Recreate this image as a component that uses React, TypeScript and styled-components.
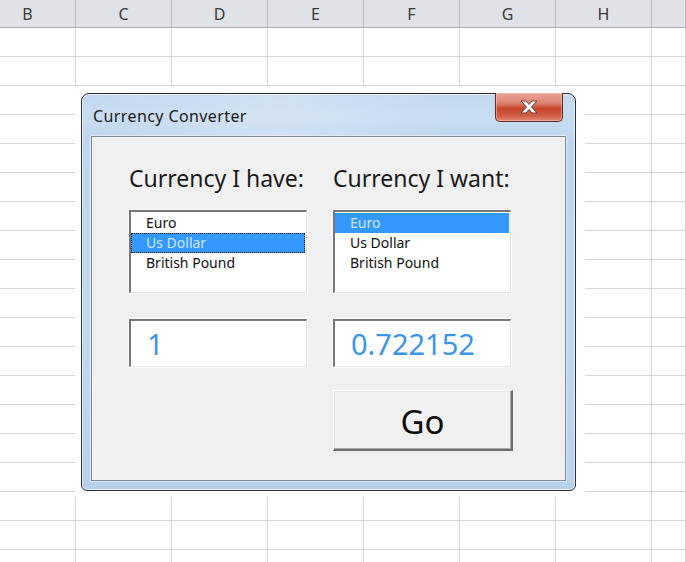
import React from "react";
import styled, { createGlobalStyle } from "styled-components";

const Global = createGlobalStyle`
  html, body { margin: 0; padding: 0; background: #ffffff; overflow: hidden; }
  body { width: 686px; height: 562px; font-family: "Noto Sans", "DejaVu Sans", sans-serif; }
`;

const Page = styled.div`
  position: relative;
  width: 686px;
  height: 562px;
  overflow: hidden;
  background: #ffffff;
`;

const Sheet = styled.div`
  display: grid;
  grid-template-columns: 76px repeat(6, 96px) 1fr;
  grid-auto-rows: 29px;
  grid-template-rows: 28px;
`;

const HeadCell = styled.div<{ $partial?: boolean }>`
  box-sizing: border-box;
  height: 28px;
  background: #dfe3e8;
  border-right: 1px solid #b9bec5;
  border-bottom: 1px solid #a9aeb5;
  display: flex;
  align-items: center;
  justify-content: center;
  padding-right: ${(p) => (p.$partial ? "20px" : "0")};
  font-family: "Noto Sans", sans-serif;
  font-size: 16px;
  color: #3a3a3a;
  line-height: 1;
  padding-top: 1px;
`;

const Cell = styled.div`
  box-sizing: border-box;
  height: 29px;
  border-right: 1px solid #d6d6d6;
  border-bottom: 1px solid #d6d6d6;
`;

const Clearance = styled.div`
  position: absolute;
  left: 75px;
  top: 86px;
  width: 510px;
  height: 411px;
  background: #ffffff;
`;

const Frame = styled.div`
  position: absolute;
  left: 81px;
  top: 93px;
  width: 495px;
  height: 398px;
  box-sizing: border-box;
  border: 1px solid #2c3138;
  border-radius: 8px 8px 6px 6px;
  background: linear-gradient(
    180deg,
    #c3d8ef 0%,
    #c8dcf1 6%,
    #bfd6ee 12%,
    #c2d8ef 60%,
    #b7d1ec 100%
  );
  box-shadow: inset 0 0 0 1px rgba(255, 255, 255, 0.55);
  display: flex;
  flex-direction: column;
  padding: 0 9px 9px 9px;
`;

const TitleBar = styled.div`
  height: 42px;
  display: flex;
  align-items: flex-start;
  justify-content: space-between;
  background: linear-gradient(
    90deg,
    rgba(255, 255, 255, 0) 0%,
    rgba(255, 255, 255, 0.22) 40%,
    rgba(255, 255, 255, 0) 75%
  );
`;

const Title = styled.div`
  margin-top: 11px;
  margin-left: 2px;
  font-family: "Noto Sans", sans-serif;
  font-size: 16px;
  color: #1b1b1b;
  letter-spacing: 0.4px;
`;

const CloseButton = styled.div`
  margin-top: -1px;
  margin-right: 3px;
  width: 68px;
  height: 29px;
  box-sizing: border-box;
  border: 1px solid #5b2d25;
  border-top: none;
  border-radius: 0 0 5px 5px;
  background: linear-gradient(
    180deg,
    #e9a597 0%,
    #dd8573 35%,
    #c8442c 55%,
    #cf5a42 80%,
    #e08b76 100%
  );
  box-shadow: inset 0 0 0 1px rgba(255, 210, 200, 0.45);
  display: flex;
  align-items: center;
  justify-content: center;
`;

const Client = styled.div`
  flex: 1;
  box-sizing: border-box;
  background: #f0f0f0;
  border: 1px solid #7e8b99;
  box-shadow: 0 0 0 1px rgba(255, 255, 255, 0.5);
  display: grid;
  grid-template-columns: 178px 178px;
  column-gap: 26px;
  align-content: start;
  padding: 26px 0 0 37px;
`;

const Label = styled.div`
  font-family: "Noto Sans", sans-serif;
  font-size: 23px;
  line-height: 30px;
  color: #1a1a1a;
  white-space: nowrap;
  margin-left: 0px;
  margin-bottom: 17px;
`;

const ListBox = styled.div`
  height: 83px;
  box-sizing: border-box;
  background: #ffffff;
  border-top: 2px solid #777777;
  border-left: 2px solid #777777;
  border-right: 1px solid #e4e4e4;
  border-bottom: 1px solid #e4e4e4;
  box-shadow: 0 0 0 1px #fafafa;
  padding-top: 1px;
`;

const ListItem = styled.div<{ $selected?: boolean; $focus?: boolean }>`
  height: 20px;
  box-sizing: border-box;
  font-family: "Noto Sans", sans-serif;
  font-size: 14px;
  line-height: 20px;
  padding-left: 15px;
  margin-right: 1px;
  background: ${(p) => (p.$selected ? "#3399ff" : "transparent")};
  color: ${(p) => (p.$selected ? "#cfe6ff" : "#111111")};
  outline: ${(p) => (p.$focus ? "1px dotted #1a1a1a" : "none")};
  outline-offset: -1px;
  white-space: nowrap;
`;

const TextBox = styled.div`
  margin-top: 26px;
  height: 48px;
  box-sizing: border-box;
  background: #ffffff;
  border-top: 2px solid #777777;
  border-left: 2px solid #777777;
  border-right: 1px solid #e4e4e4;
  border-bottom: 1px solid #e4e4e4;
  box-shadow: 0 0 0 1px #fafafa;
  display: flex;
  align-items: center;
  padding-left: 16px;
  font-family: "Noto Sans", sans-serif;
  font-size: 29px;
  color: #3d95e6;
  line-height: 1;
`;

const GoButton = styled.div`
  grid-column: 2;
  margin-top: 23px;
  width: 180px;
  height: 61px;
  box-sizing: border-box;
  background: #f0f0f0;
  border-top: 1px solid #ffffff;
  border-left: 1px solid #ffffff;
  border-right: 2px solid #6e6e6e;
  border-bottom: 2px solid #6e6e6e;
  box-shadow: inset -1px -1px 0 #a8a8a8, inset 1px 1px 0 #e6e6e6;
  display: flex;
  align-items: center;
  justify-content: center;
  font-family: "Noto Sans", sans-serif;
  font-size: 33px;
  color: #0d0d0d;
  line-height: 1;
  padding-top: 2px;
`;

const CloseGlyph = () => (
  <svg width="20" height="14" viewBox="0 0 20 14">
    <path
      d="M2 1 H7 L10 4.5 L13 1 H18 L12.5 7 L18 13 H13 L10 9.5 L7 13 H2 L7.5 7 Z"
      fill="#ffffff"
      stroke="#6b3a33"
      strokeWidth="1"
      strokeLinejoin="round"
    />
  </svg>
);

const cols = ["B", "C", "D", "E", "F", "G", "H", ""];
const currencies = ["Euro", "Us Dollar", "British Pound"];

export default function App() {
  const rows = Array.from({ length: 19 });
  return (
    <Page>
      <Global />
      <Sheet>
        {cols.map((c, i) => (
          <HeadCell key={"h" + i} $partial={i === 0}>
            {c}
          </HeadCell>
        ))}
        {rows.map((_, r) =>
          cols.map((_, c) => <Cell key={r + "-" + c} />)
        )}
      </Sheet>
      <Clearance />
      <Frame>
        <TitleBar>
          <Title>Currency Converter</Title>
          <CloseButton>
            <CloseGlyph />
          </CloseButton>
        </TitleBar>
        <Client>
          <Label>Currency I have:</Label>
          <Label>Currency I want:</Label>
          <ListBox>
            {currencies.map((c) => (
              <ListItem key={c} $selected={c === "Us Dollar"} $focus={c === "Us Dollar"}>
                {c}
              </ListItem>
            ))}
          </ListBox>
          <ListBox>
            {currencies.map((c) => (
              <ListItem key={c} $selected={c === "Euro"}>
                {c}
              </ListItem>
            ))}
          </ListBox>
          <TextBox>1</TextBox>
          <TextBox>0.722152</TextBox>
          <GoButton>Go</GoButton>
        </Client>
      </Frame>
    </Page>
  );
}
